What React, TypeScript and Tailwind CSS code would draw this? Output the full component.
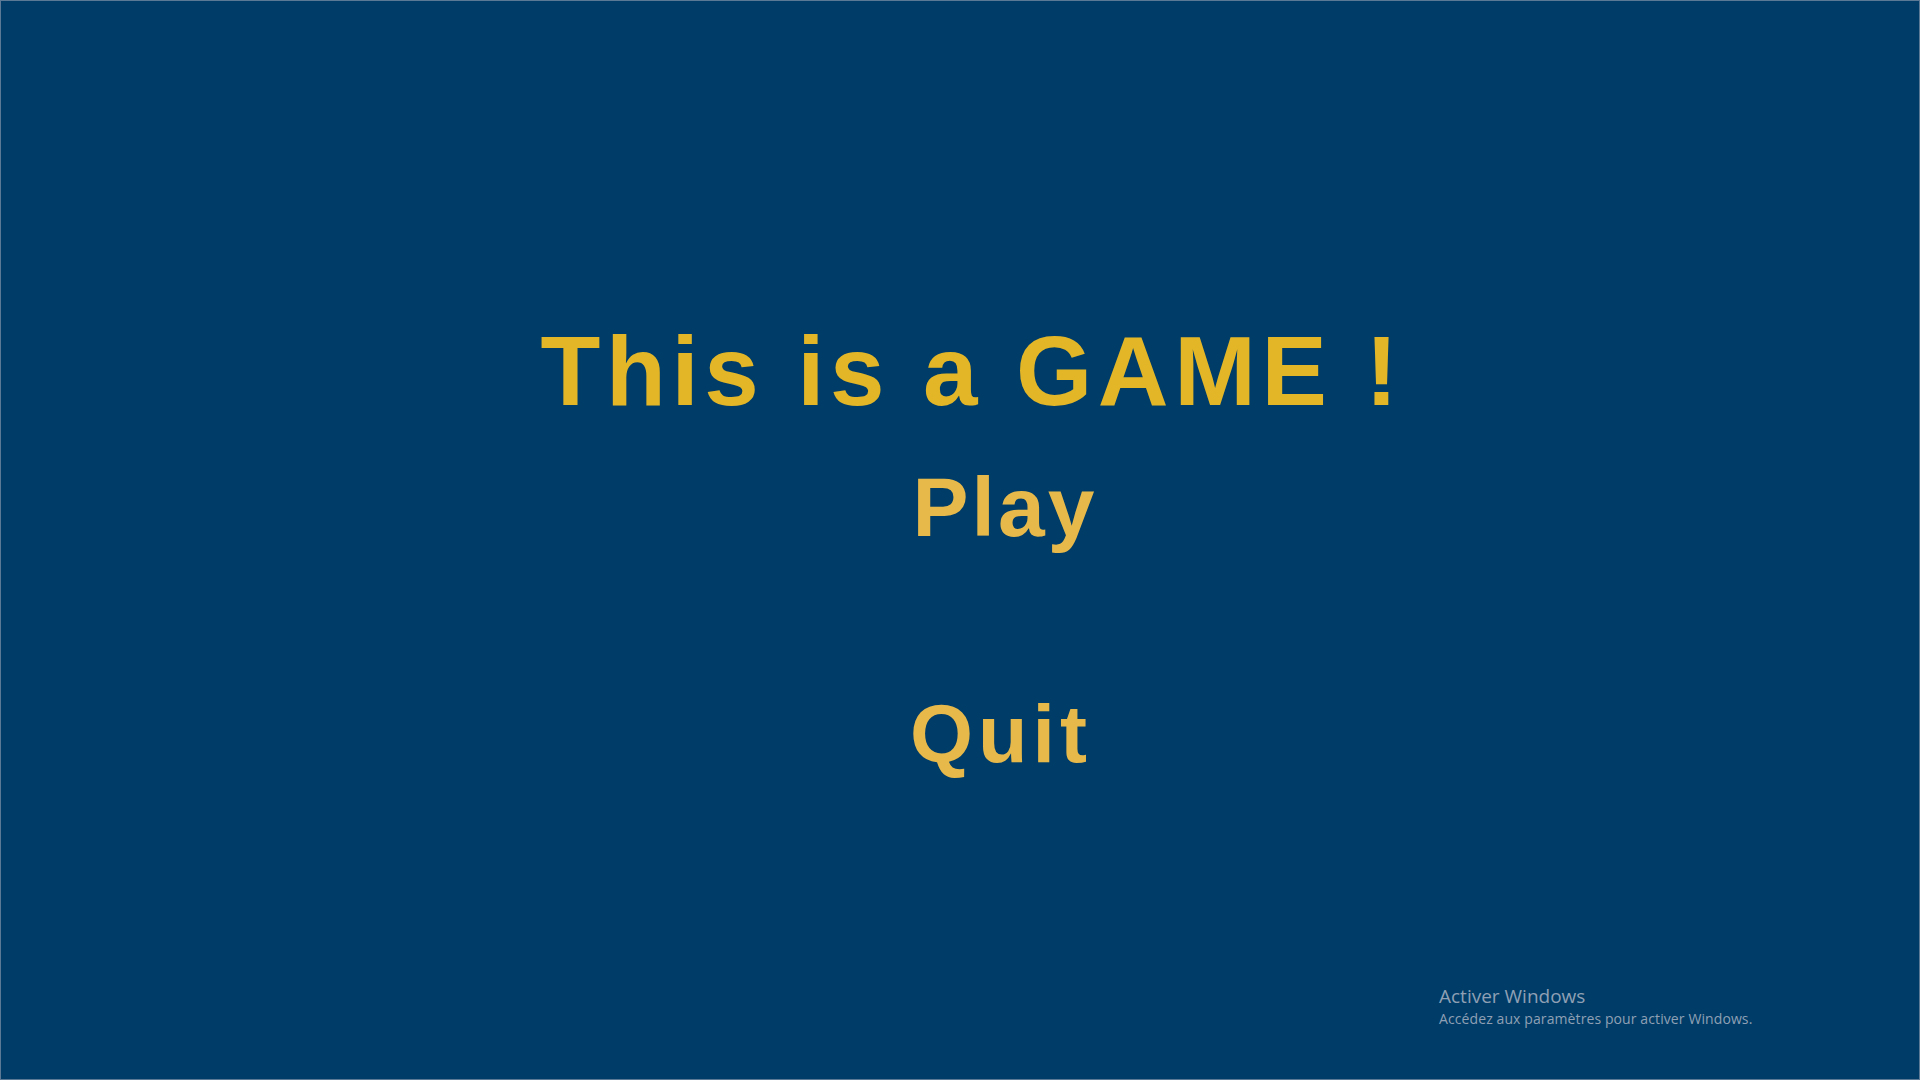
import React from "react";

export default function App() {
  return (
    <div className="relative w-[1920px] h-[1080px] bg-[#003c68] border border-[#5b7894] overflow-hidden font-['Liberation_Sans',Arial,sans-serif]">
      <div className="flex flex-col items-center pt-[321px]">
        <h1 className="pl-[24px] text-[98px] leading-none font-bold text-[#e2b627] tracking-[5.6px]">
          This is a GAME !
        </h1>
        <button className="mt-[45px] pl-[90px] text-[84px] leading-none font-bold text-[#e7b94a] tracking-[3px]">
          Play
        </button>
        <button className="mt-[145px] pl-[82px] text-[81px] leading-none font-bold text-[#e7b94a] tracking-[5px]">
          Quit
        </button>
      </div>
      <div className="absolute left-[1438px] top-[982px] text-[#8fa0b4] font-['Open_Sans',sans-serif]">
        <div className="text-[19px] leading-[26px]">Activer Windows</div>
        <div className="text-[14px] leading-[19px] tracking-[0.1px]">Accédez aux paramètres pour activer Windows.</div>
      </div>
    </div>
  );
}
